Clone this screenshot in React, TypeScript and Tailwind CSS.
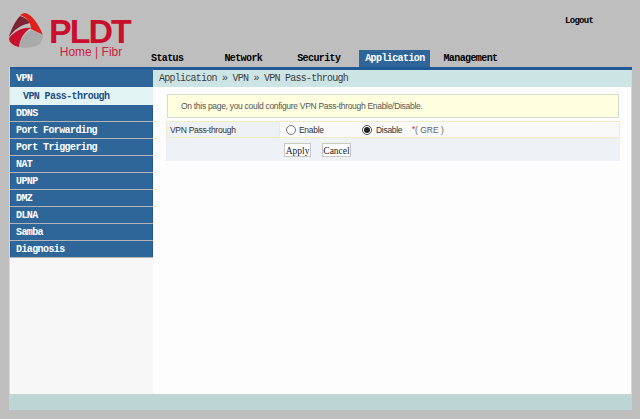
const SERIF = "font-['Liberation_Mono',monospace] text-[10px] font-bold tracking-[-0.6px]";

const TABS = ["Status", "Network", "Security", "Application", "Management"];
const MENU = ["DDNS", "Port Forwarding", "Port Triggering", "NAT", "UPNP", "DMZ", "DLNA", "Samba", "Diagnosis"];

function Logo() {
  return (
    <div className="flex h-[60px] w-[141px] shrink-0 items-start pt-[13px]">
      <svg width="35" height="35" viewBox="0 0 35 35" className="shrink-0">
        <path d="M16 0 C23 1 30 12 34 22 C30 20 26 18 22 16 C22 10 19 5 11 2 C13 1 14 0 16 0 Z" fill="#e0201a" />
        <path d="M11 3 C6 8 2 17 0 24 C5 17 11 12 21 10 C19 7 15 4 11 3 Z" fill="#7c2230" />
        <path d="M0 25 C6 18 14 14 22 15 C16 18 11 25 10 34 C5 33 0 30 0 25 Z" fill="#c8102e" />
        <path d="M10 34 C11 26 16 20 22 17 C26 18 31 20 34 22 C34 27 31 32 27 33 C20 35 15 35 10 34 Z" fill="#a9a9a9" />
      </svg>
      <div className="ml-[4px] flex w-[83px] flex-col items-center pt-[3px] font-['Liberation_Sans',sans-serif]">
        <div className="text-[34px] font-bold leading-[30px] tracking-[-2px] text-[#c8102e]">PLDT</div>
        <div className="pl-[3px] text-[12px] leading-[13px] text-[#d0203f]">Home | Fibr</div>
      </div>
    </div>
  );
}

export default function App() {
  return (
    <div className="flex h-[419px] w-[640px] flex-col overflow-hidden bg-[#bebebe] pb-[9px] pl-[9px] pr-[8px]">
      {/* header */}
      <div className="relative flex h-[67px] shrink-0">
        <Logo />
        <div className="flex items-end">
          {TABS.map((t) => (
            <div
              key={t}
              className={`${SERIF} flex h-[17px] items-center px-[1px] ${
                t === "Application"
                  ? "ml-[18px] mr-[12px] w-[71px] justify-center bg-[#2f6699] text-white"
                  : t === "Status"
                    ? "mr-[39px] text-black"
                    : t === "Network"
                      ? "mr-[33px] text-black"
                      : "text-black"
              }`}
            >
              {t}
            </div>
          ))}
        </div>
        <div className="absolute left-[556px] top-[15px] font-['Liberation_Mono',monospace] text-[9px] font-bold tracking-[-0.7px] text-black">Logout</div>
      </div>

      <div className="h-[3px] shrink-0 bg-[#1f5a96]" />

      {/* body */}
      <div className="flex min-h-0 flex-1">
        <div className="-mt-[3px] w-[144px] shrink-0 border-l border-[#d8d8d8] bg-[#f7f7f7]">
          <div className={`${SERIF} flex h-[20px] items-center border-t-[2px] border-[#1f5a96] bg-[#2f6699] pl-[6px] text-white`}>VPN</div>
          <div className={`${SERIF} flex h-[18px] items-center bg-[#e3f4f4] pl-[13px] text-[#1f4f86]`}>VPN Pass-through</div>
          {MENU.map((m) => (
            <div key={m} className="h-[17px] bg-[#b4b4b4]">
              <div className={`${SERIF} flex h-[16px] items-center border-l border-r border-[#1f5a96] bg-[#2f6699] pl-[5px] text-white`}>{m}</div>
            </div>
          ))}
        </div>

        <div className="flex min-w-0 flex-1 flex-col border-r border-[#d8d8d8] bg-[#fdfdfd] font-['Liberation_Sans',sans-serif]">
          <div className="flex h-[17px] shrink-0 items-center bg-[#cde4e5] pl-[6px] font-['Liberation_Mono',monospace] text-[10px] tracking-[-0.75px] text-[#3d3d3d]">
            Application » VPN » VPN Pass-through
          </div>
          <div className="px-[13px] pt-[7px]">
            <div className="ml-[1px] flex h-[24px] w-[452px] items-center border border-[#d5dcd2] bg-[#ffffe0] pl-[13px] text-[8.5px] tracking-[-0.3px] text-[#555]">
              On this page, you could configure VPN Pass-through Enable/Disable.
            </div>
            <div className="mt-[3px] flex h-[17px] w-[454px] border border-[#f0ebc8] bg-[#f9f9fa] text-[8.5px] tracking-[-0.3px] text-[#333]">
              <div className="flex w-[113px] items-center border-r border-[#f0ebc8] bg-[#eef1f6] pl-[3px] pt-[1px]">VPN Pass-through</div>
              <div className="flex items-center pl-[6px]">
                <span className="h-[10px] w-[10px] rounded-full border border-[#777] bg-white" />
                <span className="ml-[3px] w-[63px] pt-[1px]">Enable</span>
                <span className="flex h-[10px] w-[10px] items-center justify-center rounded-full border border-[#555] bg-white">
                  <span className="h-[6px] w-[6px] rounded-full bg-[#222]" />
                </span>
                <span className="ml-[4px] w-[36px] pt-[1px]">Disable</span>
                <span className="text-[#e0102a]">*</span>
                <span className="pt-[1px] tracking-[0px] text-[#666]">( GRE )</span>
              </div>
            </div>
            <div className="flex h-[23px] w-[454px] items-center bg-[#eef1f6] pl-[118px] pt-[1px]">
              <button className="h-[14px] w-[27px] border border-[#c8c8c8] bg-white font-['Liberation_Serif',serif] text-[9.5px] text-[#222]">Apply</button>
              <button className="ml-[11px] h-[14px] w-[29px] border border-[#c8c8c8] bg-white font-['Liberation_Serif',serif] text-[9.5px] text-[#222]">Cancel</button>
            </div>
          </div>
        </div>
      </div>

      {/* footer */}
      <div className="h-[16px] shrink-0 border-t border-[#c6d4d4] bg-[#bed5d6]" />
    </div>
  );
}
